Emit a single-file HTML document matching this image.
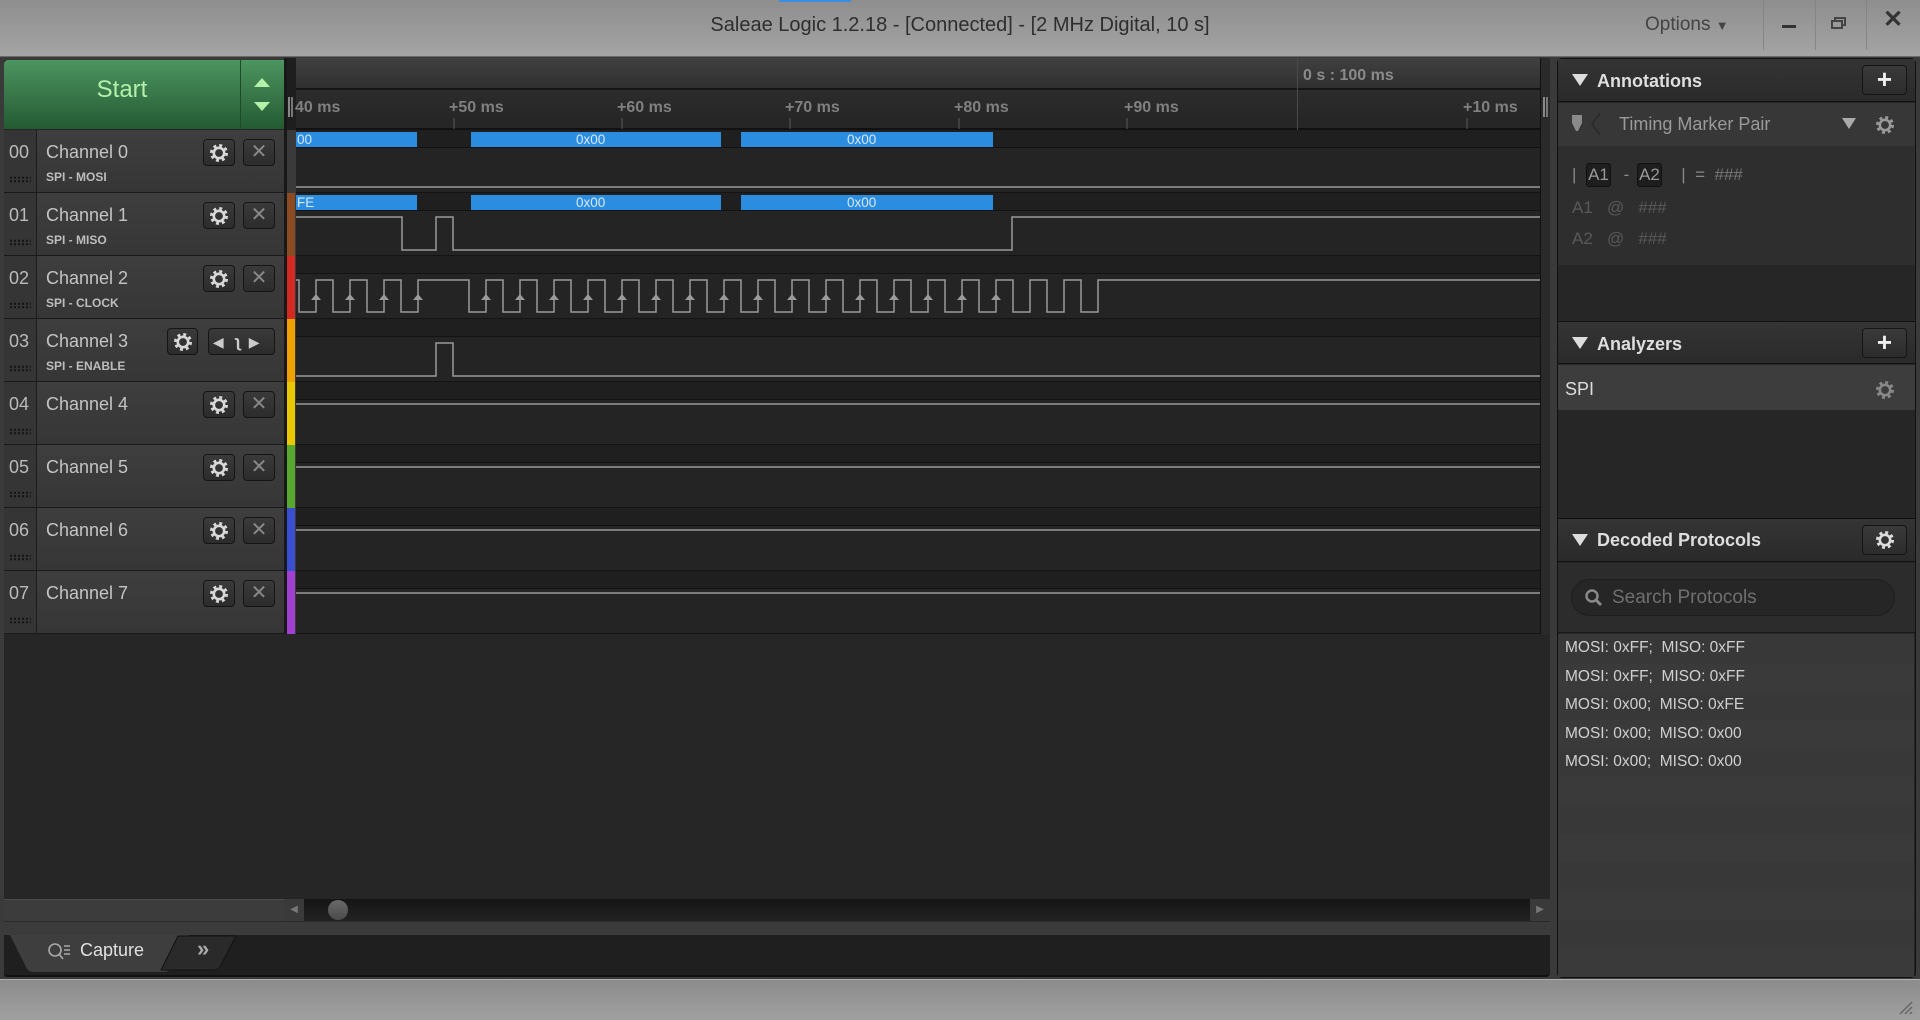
<!DOCTYPE html>
<html><head><meta charset="utf-8"><style>
*{margin:0;padding:0;box-sizing:border-box}
body{width:1920px;height:1020px;overflow:hidden;background:#3a3a3a;font-family:"Liberation Sans",sans-serif;position:relative}
.a{position:absolute}
.btn{position:absolute;background:linear-gradient(#3a3a3a,#2c2c2c);border:1px solid #151515;border-radius:4px}
.cn{color:#c4c4c4;font-size:18px}
.sub{color:#bdbdbd;font-size:12px;font-weight:bold}
.num{color:#bbb;font-size:18px}
.hdr{color:#dedede;font-size:18px;font-weight:bold}
.li{position:absolute;left:1558px;width:356px;height:28.5px;color:#d0d0d0;font-size:15.5px;padding-left:7px;line-height:28px}
.grip{position:absolute;width:22px;height:7px;background:radial-gradient(circle,#151515 1px,transparent 1.3px) 0 0/4px 3.5px}
</style></head><body>
<div class="a" style="left:0;top:0;width:1920px;height:57px;background:linear-gradient(#8e8e8e,#a4a4a4);border-bottom:1px solid #6a6a6a"></div>
<div class="a" style="left:779px;top:0;width:72px;height:2px;background:#3c8ee0"></div>
<div class="a" style="left:0;top:14px;width:1920px;text-align:center;font-size:20px;color:#2e2e2e">Saleae Logic 1.2.18 - [Connected] - [2 MHz Digital, 10 s]</div>
<div class="a" style="left:1645px;top:14px;font-size:19px;color:#444">Options <span style="font-size:13px">▼</span></div>
<div class="a" style="left:1763px;top:0;width:1px;height:50px;background:#858585"></div>
<div class="a" style="left:1815px;top:0;width:1px;height:50px;background:#858585"></div>
<div class="a" style="left:1866px;top:0;width:1px;height:50px;background:#858585"></div>
<div class="a" style="left:1782px;top:25px;width:14px;height:3px;background:#333"></div>
<div class="a" style="left:1834px;top:17px;width:12px;height:9px;border:2px solid #444"></div>
<div class="a" style="left:1831px;top:20px;width:12px;height:9px;border:2px solid #444;background:#999"></div>
<div class="a" style="left:1883px;top:5px;font-size:24px;color:#333;font-weight:bold">✕</div>

<div class="a" style="left:4px;top:60px;width:280px;height:917px;background:#262626"></div>
<div class="a" style="left:4px;top:60px;width:236px;height:69px;background:linear-gradient(#4c9560,#245a32);border-radius:4px 0 0 0"></div>
<div class="a" style="left:4px;top:76px;width:236px;text-align:center;font-size:24px;color:#b4f0aa">Start</div>
<div class="a" style="left:240px;top:60px;width:44px;height:69px;background:linear-gradient(#4c9560,#245a32);border-left:1px solid #1e4a28"></div>
<svg class="a" style="left:250px;top:76px" width="24" height="38"><path d="M4 11 L12 2 L20 11Z" fill="#b4f0aa"/><path d="M4 26 L12 35 L20 26Z" fill="#b4f0aa"/></svg>

<div id="rows"></div>
<script>
var cols=['#3a3a3a','#8b4b22','#d02a22','#f0a000','#e8c800','#58a830','#3a4ed0','#a040d0'];
var subs=['SPI - MOSI','SPI - MISO','SPI - CLOCK','SPI - ENABLE','','','',''];
var gear='<svg width="22" height="22" viewBox="-11 -11 22 22"><circle r="7" fill="none" stroke="#d8d8d8" stroke-width="4" stroke-dasharray="2.7 2.8"/><circle r="5.2" fill="none" stroke="#d8d8d8" stroke-width="2.6"/></svg>';
var h='';
for(var i=0;i<8;i++){var T=130+63*i;
h+='<div class="a" style="left:4px;top:'+T+'px;width:33px;height:62px;background:#353535;border-right:1px solid #1c1c1c"></div>';
h+='<div class="a" style="left:37px;top:'+T+'px;width:247px;height:62px;background:linear-gradient(#3e3e3e,#363636)"></div>';
h+='<div class="a" style="left:4px;top:'+(T+62)+'px;width:280px;height:1px;background:#1a1a1a"></div>';
h+='<div class="a num" style="left:9px;top:'+(T+12)+'px">0'+i+'</div>';
h+='<div class="grip" style="left:9px;top:'+(T+46)+'px"></div>';
h+='<div class="a cn" style="left:46px;top:'+(T+12)+'px">Channel '+i+'</div>';
if(subs[i])h+='<div class="a sub" style="left:46px;top:'+(T+40)+'px">'+subs[i]+'</div>';
if(i==3){
h+='<div class="btn" style="left:167px;top:'+(T+9)+'px;width:31px;height:27px;padding:2px 0 0 4px">'+gear+'</div>';
h+='<div class="btn" style="left:208px;top:'+(T+9)+'px;width:67px;height:27px;color:#ccc;font-size:14px;line-height:25px">&nbsp;◀&nbsp;&nbsp;&nbsp;<b style="font-size:17px">ʅ</b>&nbsp;&nbsp;▶</div>';
}else{
h+='<div class="btn" style="left:203px;top:'+(T+9)+'px;width:32px;height:27px;padding:2px 0 0 4px">'+gear+'</div>';
h+='<div class="btn" style="left:243px;top:'+(T+9)+'px;width:32px;height:27px;color:#888;font-size:20px;text-align:center;line-height:25px">✕</div>';}
h+='<div class="a" style="left:287px;top:'+T+'px;width:8px;height:63px;background:'+cols[i]+'"></div>';
h+='<div class="a" style="left:296px;top:'+T+'px;width:1244px;height:18px;background:#1f1f1f;border-bottom:1px solid #131313"></div>';
h+='<div class="a" style="left:296px;top:'+(T+18)+'px;width:1244px;height:44px;background:#242424"></div>';
h+='<div class="a" style="left:296px;top:'+(T+62)+'px;width:1244px;height:1px;background:#141414"></div>';
}
document.getElementById('rows').innerHTML=h;
</script>
<div class="a" style="left:284px;top:58px;width:3px;height:576px;background:#181818"></div>
<div class="a" style="left:287px;top:58px;width:9px;height:72px;background:#1e1e1e"></div>

<div class="a" style="left:296px;top:58px;width:1244px;height:32px;background:linear-gradient(#404040,#303030);border-bottom:2px solid #151515"></div>
<div class="a" style="left:296px;top:90px;width:1244px;height:40px;background:linear-gradient(#2c2c2c,#252525);border-bottom:2px solid #111"></div>
<div class="a" style="left:1303px;top:67px;font-size:16px;font-weight:bold;color:#8a8a8a">0 s : 100 ms</div>
<div class="a" style="left:1297px;top:58px;width:1px;height:72px;background:#4a4a4a"></div>
<div class="a" style="left:1540px;top:58px;width:10px;height:841px;background:#2a2a2a;border-left:1px solid #111"></div>
<div class="a" style="left:1543px;top:97px;width:2px;height:20px;background:#888;box-shadow:3px 0 #777"></div>
<div class="a" style="left:288px;top:97px;width:2px;height:20px;background:#888;box-shadow:3px 0 #777"></div>

<svg class="a" style="left:0;top:0" width="1920" height="1020">
<g font-family="Liberation Sans" font-weight="bold" font-size="16" fill="#808080">
<text x="295" y="112">40 ms</text><text x="449" y="112">+50 ms</text><text x="617" y="112">+60 ms</text><text x="785" y="112">+70 ms</text><text x="954" y="112">+80 ms</text><text x="1124" y="112">+90 ms</text><text x="1463" y="112">+10 ms</text>
</g>
<g stroke="#5a5a5a"><path d="M454 118V129M622 118V129M790 118V129M959 118V129M1127 118V129M1467 118V129"/></g>
<g fill="#2b8de0"><rect x="296" y="132" width="121" height="15"/><rect x="471" y="132" width="250" height="15"/><rect x="741" y="132" width="252" height="15"/>
<rect x="296" y="195" width="121" height="15"/><rect x="471" y="195" width="250" height="15"/><rect x="741" y="195" width="252" height="15"/></g>
<g font-family="Liberation Sans" font-size="13.5" fill="#d8e8f8"><text x="297" y="144">00</text><text x="576" y="144">0x00</text><text x="847" y="144">0x00</text><text x="297" y="207">FE</text><text x="576" y="207">0x00</text><text x="847" y="207">0x00</text></g>
<g fill="none" stroke="#9a9a9a" stroke-width="1.5">
<path d="M296 187H1540"/>
<path d="M296 217H402V250H436V217H453V250H1012V217H1540"/>
<path id="clk" d=""/>
<path d="M296 376H436V343H453V376H1540"/>
<path d="M296 404H1540M296 467H1540M296 530H1540M296 593H1540"/>
</g>
<g id="arr" fill="#9a9a9a"></g>
</svg>
<script>
var d='M296 280H299V312';var a='';
var r=[316,350,384,418];
for(var k=0;k<4;k++){d+='H'+r[k]+'V280';a+='<path d="M'+(r[k]-5)+' 300L'+r[k]+' 294L'+(r[k]+5)+' 300Z"/>';if(k<3)d+='H'+(r[k]+17)+'V312';}
d+='H469V312';
for(var k=0;k<19;k++){var x=486+34*k;d+='H'+x+'V280';if(k<16)a+='<path d="M'+(x-5)+' 300L'+x+' 294L'+(x+5)+' 300Z"/>';if(k<18)d+='H'+(x+17)+'V312';}
d+='H1540';
document.getElementById('clk').setAttribute('d',d);
document.getElementById('arr').innerHTML=a;
</script>

<div class="a" style="left:4px;top:634px;width:1546px;height:265px;background:#262626"></div>
<div class="a" style="left:4px;top:899px;width:280px;height:22px;background:#3c3c3c;border-top:1px solid #4a4a4a"></div>
<div class="a" style="left:284px;top:899px;width:20px;height:22px;background:#3a3a3a;color:#777;font-size:10px;line-height:22px;text-align:center">◀</div>
<div class="a" style="left:304px;top:899px;width:1226px;height:22px;background:linear-gradient(#151515,#222)"></div>
<div class="a" style="left:1530px;top:899px;width:20px;height:22px;background:#3a3a3a;color:#777;font-size:10px;line-height:22px;text-align:center">▶</div>
<div class="a" style="left:328px;top:900px;width:20px;height:20px;border-radius:50%;background:linear-gradient(#6a6a6a,#4a4a4a)"></div>
<div class="a" style="left:4px;top:921px;width:1546px;height:14px;background:#3b3b3b;border-top:1px solid #2a2a2a"></div>
<div class="a" style="left:4px;top:935px;width:1546px;height:42px;background:#1f1f1f;border-bottom:2px solid #111;border-radius:0 0 4px 4px"></div>
<svg class="a" style="left:4px;top:935px" width="240" height="42"><path d="M6 0H185L168 33Q165 37 160 37H30Q24 37 22 32Z" fill="#3e3e3e"/><path d="M174 1H232L216 32Q214 35 209 35H157Z" fill="#2a2a2a" stroke="#111"/></svg>
<svg class="a" style="left:46px;top:940px" width="28" height="24"><circle cx="9" cy="10" r="6" fill="none" stroke="#aaa" stroke-width="1.6"/><path d="M13 14L17 19M18 6H24M18 10H24M18 14H24" stroke="#aaa" stroke-width="1.6"/></svg>
<div class="a" style="left:80px;top:940px;font-size:18px;color:#e0e0e0">Capture</div>
<div class="a" style="left:197px;top:936px;font-size:22px;color:#aaa;font-weight:bold">»</div>

<div class="a" style="left:1557px;top:58px;width:359px;height:920px;background:#262626;border:1px solid #111;border-radius:5px"></div>
<div class="a" style="left:1558px;top:59px;width:357px;height:43px;background:linear-gradient(#343434,#2a2a2a);border-bottom:1px solid #111"></div>
<svg class="a" style="left:1571px;top:73px" width="18" height="14"><path d="M1 1H17L9 13Z" fill="#ddd"/></svg>
<div class="a hdr" style="left:1597px;top:71px">Annotations</div>
<div class="btn" style="left:1862px;top:65px;width:45px;height:30px;color:#eee;font-size:26px;font-weight:bold;text-align:center;line-height:27px">+</div>
<div class="a" style="left:1558px;top:103px;width:357px;height:43px;background:#373737"></div>
<svg class="a" style="left:1570px;top:113px" width="40" height="24"><path d="M2 2H12V10L8 18H6L2 10Z" fill="#8a8a8a"/><path d="M30 0L22 11L30 22" fill="none" stroke="#2a2a2a" stroke-width="1.5"/></svg>
<div class="a" style="left:1619px;top:114px;font-size:18px;color:#9a9a9a">Timing Marker Pair</div>
<svg class="a" style="left:1841px;top:117px" width="16" height="13"><path d="M1 1H15L8 12Z" fill="#aaa"/></svg>
<div class="a" style="left:1874px;top:114px">
<svg width="22" height="22" viewBox="-11 -11 22 22"><circle r="7" fill="none" stroke="#999" stroke-width="4" stroke-dasharray="2.7 2.8"/><circle r="5.2" fill="none" stroke="#999" stroke-width="2.6"/></svg></div>
<div class="a" style="left:1558px;top:146px;width:357px;height:119px;background:#2e2e2e"></div>
<div class="a" style="left:1572px;top:165px;font-size:17px;color:#888;white-space:pre">|          -           |  =  <span style="color:#777">###</span></div>
<div class="a" style="left:1586px;top:163px;width:25px;height:24px;background:#1e1e1e;border:1px solid #111;border-radius:3px;color:#999;font-size:17px;text-align:center;line-height:22px">A1</div>
<div class="a" style="left:1637px;top:163px;width:25px;height:24px;background:#1e1e1e;border:1px solid #111;border-radius:3px;color:#999;font-size:17px;text-align:center;line-height:22px">A2</div>
<div class="a" style="left:1572px;top:198px;font-size:17px;color:#595959;white-space:pre">A1   @   ###</div>
<div class="a" style="left:1572px;top:229px;font-size:17px;color:#595959;white-space:pre">A2   @   ###</div>

<div class="a" style="left:1558px;top:321px;width:357px;height:43px;background:linear-gradient(#343434,#2a2a2a);border-top:1px solid #111;border-bottom:1px solid #111"></div>
<svg class="a" style="left:1571px;top:336px" width="18" height="14"><path d="M1 1H17L9 13Z" fill="#ddd"/></svg>
<div class="a hdr" style="left:1597px;top:334px">Analyzers</div>
<div class="btn" style="left:1862px;top:328px;width:45px;height:30px;color:#eee;font-size:26px;font-weight:bold;text-align:center;line-height:27px">+</div>
<div class="a" style="left:1558px;top:365px;width:357px;height:45px;background:#3d3d3d"></div>
<div class="a" style="left:1565px;top:379px;font-size:18px;color:#ddd">SPI</div>
<div class="a" style="left:1874px;top:379px">
<svg width="22" height="22" viewBox="-11 -11 22 22"><circle r="7" fill="none" stroke="#888" stroke-width="4" stroke-dasharray="2.7 2.8"/><circle r="5.2" fill="none" stroke="#888" stroke-width="2.6"/></svg></div>

<div class="a" style="left:1558px;top:518px;width:357px;height:44px;background:linear-gradient(#343434,#2a2a2a);border-top:1px solid #111;border-bottom:1px solid #111"></div>
<svg class="a" style="left:1571px;top:533px" width="18" height="14"><path d="M1 1H17L9 13Z" fill="#ddd"/></svg>
<div class="a hdr" style="left:1597px;top:530px">Decoded Protocols</div>
<div class="btn" style="left:1862px;top:525px;width:45px;height:30px;padding:3px 0 0 11px">
<svg width="22" height="22" viewBox="-11 -11 22 22"><circle r="7" fill="none" stroke="#ddd" stroke-width="4" stroke-dasharray="2.7 2.8"/><circle r="5.2" fill="none" stroke="#ddd" stroke-width="2.6"/></svg></div>
<div class="a" style="left:1558px;top:563px;width:357px;height:70px;background:#2c2c2c;border-bottom:1px solid #1a1a1a"></div>
<div class="a" style="left:1571px;top:579px;width:324px;height:37px;background:#262626;border:1px solid #1e1e1e;border-radius:19px"></div>
<svg class="a" style="left:1584px;top:588px" width="20" height="20"><circle cx="8" cy="8" r="5.5" fill="none" stroke="#888" stroke-width="2.5"/><path d="M12 12L17 17" stroke="#888" stroke-width="3"/></svg>
<div class="a" style="left:1612px;top:587px;font-size:19px;color:#6f6f6f">Search Protocols</div>
<div id="list"></div>
<script>
var t=['MOSI: 0xFF;&nbsp; MISO: 0xFF','MOSI: 0xFF;&nbsp; MISO: 0xFF','MOSI: 0x00;&nbsp; MISO: 0xFE','MOSI: 0x00;&nbsp; MISO: 0x00','MOSI: 0x00;&nbsp; MISO: 0x00'];
var s='';for(var i=0;i<12;i++){s+='<div class="li" style="top:'+(634+28.5*i)+'px;background:'+(i%2?'#3a3a3a':'#383838')+'">'+(t[i]||'')+'</div>';}
s+='<div class="a" style="left:1558px;top:976px;width:357px;height:1px;background:#3a3a3a"></div>';
document.getElementById('list').innerHTML=s;
</script>

<div class="a" style="left:0;top:979px;width:1920px;height:41px;background:linear-gradient(#8c8c8c,#a0a0a0);border-top:1px solid #b0b0b0"></div>
<svg class="a" style="left:1896px;top:998px" width="18" height="18"><path d="M4 16L16 4M9 16L16 9M14 16L16 14" stroke="#666" stroke-width="1.5"/></svg>
</body></html>
